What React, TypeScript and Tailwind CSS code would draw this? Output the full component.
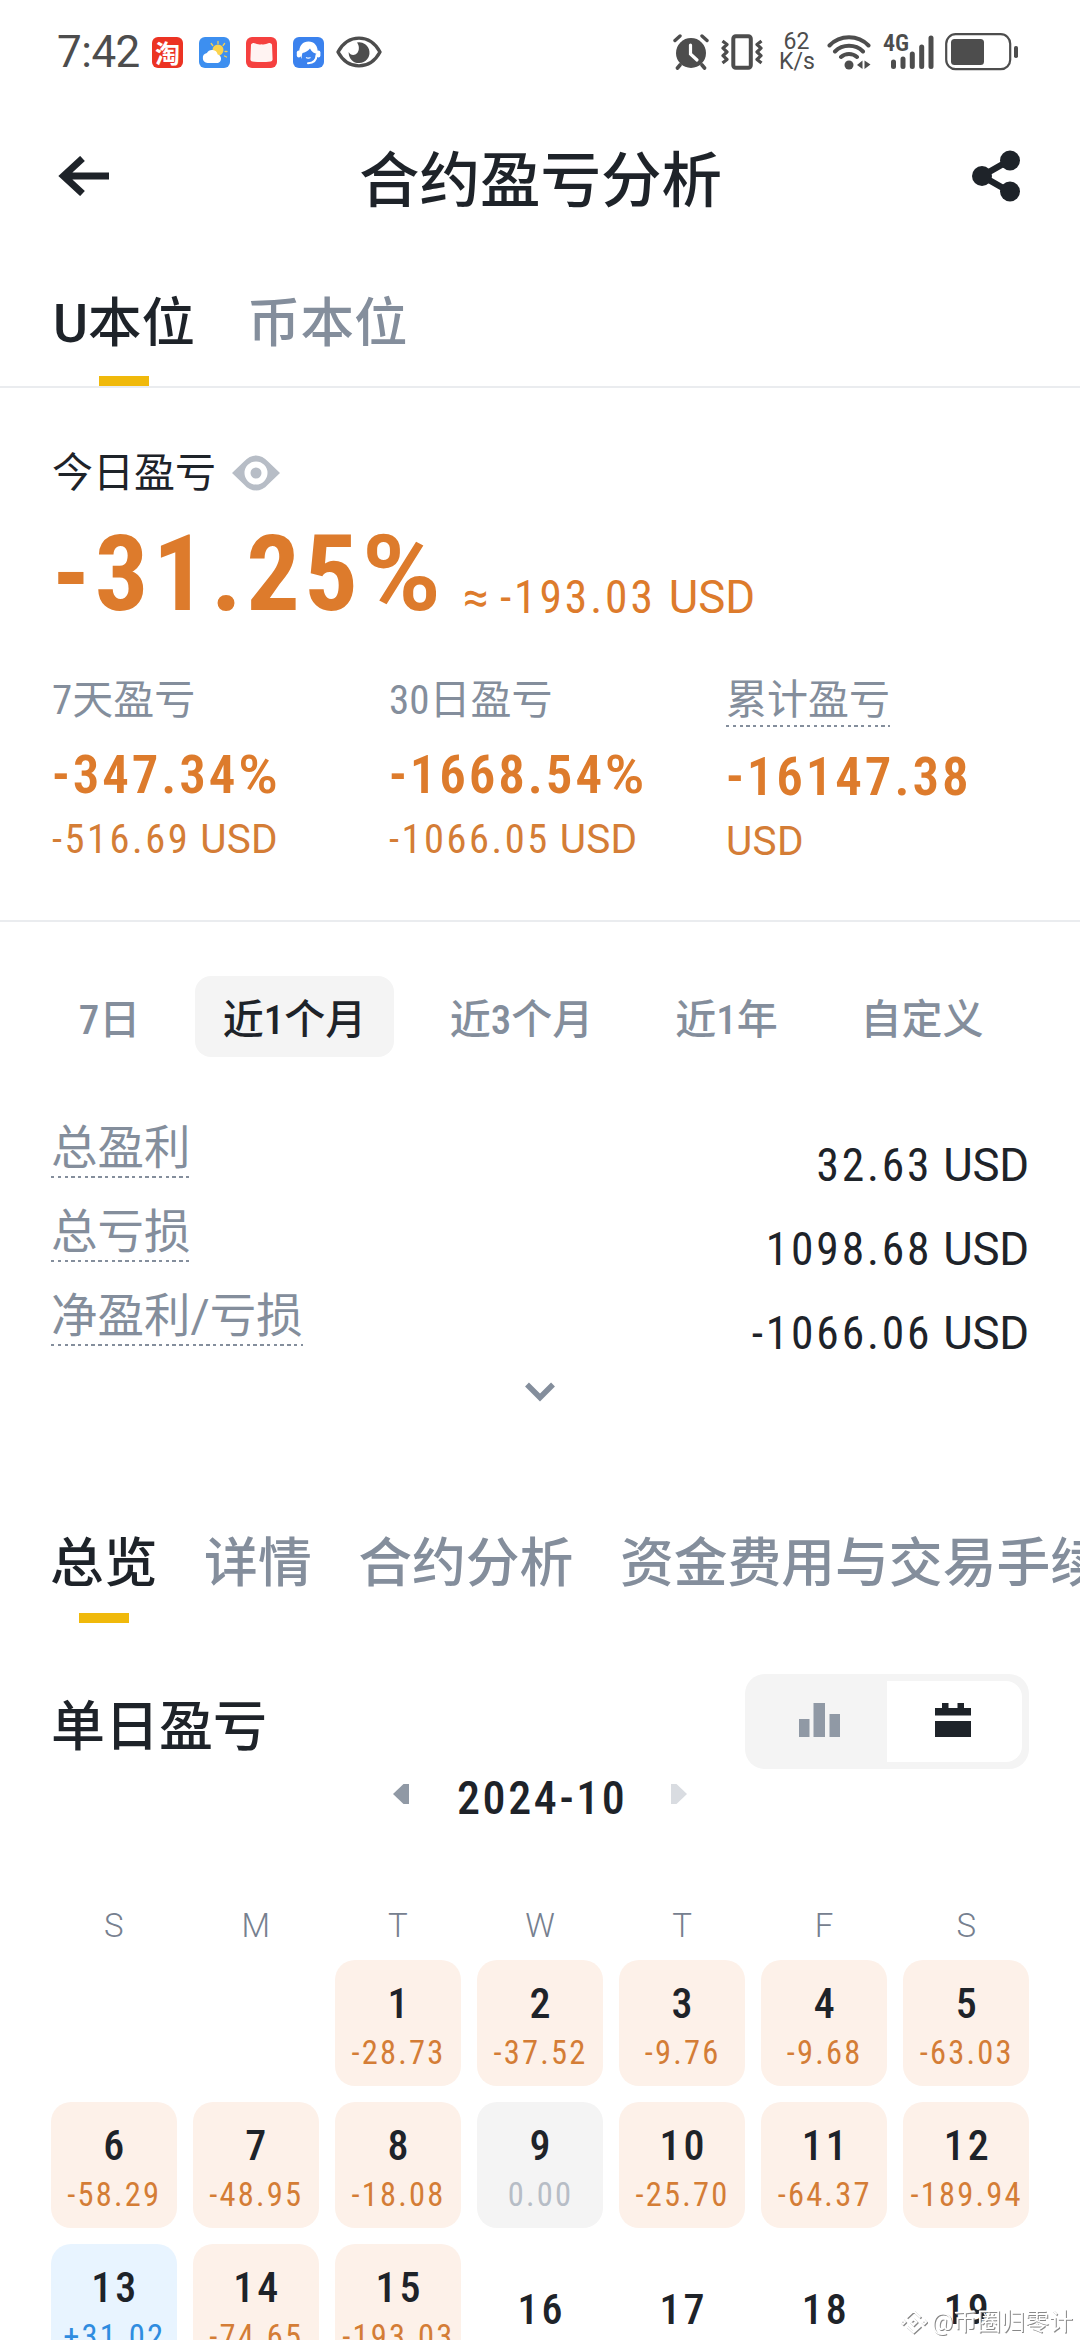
import clsx from "clsx";

const TaobaoIcon = () => (
  <div className="flex size-[31px] items-center justify-center rounded-md bg-[#ec3323] font-['Noto_Sans_CJK_SC',sans-serif] text-[25px] leading-[31px] font-bold text-white">
    淘
  </div>
);

const WeatherIcon = () => (
  <svg width="31" height="31" viewBox="0 0 31 31">
    <rect width="31" height="31" rx="6" fill="#3d8ff0" />
    <g stroke="#f7d04e" strokeWidth="1.3" strokeLinecap="round">
      <path d="M19 4.500v2M12.200 6.500l1.500 2M25.600 6.500l-1.500 2M26 14.500h2M25.500 19l2 1" />
    </g>
    <circle cx="19" cy="13" r="5.500" fill="#fbd34d" />
    <path d="M8.500 26a5 5 0 0 1-.6-9.900 5.800 5.800 0 0 1 10.800 1.300A4.500 4.500 0 0 1 19 26z" fill="#fff" />
  </svg>
);

const BookIcon = () => (
  <svg width="31" height="31" viewBox="0 0 31 31">
    <rect width="31" height="31" rx="6" fill="#f5403f" />
    <path d="M5 7.500q1-2 3-1.500 4 2 7.500 1.300 3.500.7 7.500-1.300 2-.5 3 1.500l.6 15q-.2 2-2 2-9 1-18.200 0-1.800 0-2-2z" fill="#fff3f2" />
  </svg>
);

const SupportIcon = () => (
  <svg width="31" height="31" viewBox="0 0 31 31">
    <rect width="31" height="31" rx="6" fill="#3b82ee" />
    <path
      d="M6 17c0-9 4-12.500 9.500-12.500S25 8 25 17c-3.500-.5-6.500-2-8-5.500-2 2.500-5 4-7.500 4.500-.8 2.500-1 4-.5 6z"
      fill="#fff"
    />
    <rect x="3.800" y="13.500" width="4" height="7" rx="2" fill="#fff" />
    <rect x="23.400" y="13.500" width="4" height="7" rx="2" fill="#fff" />
    <path d="M23.500 18c0 5-3 8-8.500 8.300" fill="none" stroke="#fff" strokeWidth="2" strokeLinecap="round" />
    <path d="M13 20.500c1.500.8 3 .8 4.500 0" fill="none" stroke="#fff" strokeWidth="1.200" />
  </svg>
);

const EyeCareIcon = () => (
  <svg width="46" height="32" viewBox="0 0 46 32">
    <path d="M2 16C12-2.500 34-2.500 44 16 34 34.500 12 34.500 2 16z" fill="none" stroke="#4d4d4d" strokeWidth="3.400" strokeLinejoin="round" />
    <path d="M21 6.500a10.400 10.400 0 1 1-8.300 9.500c1.500 3.500 6 4 8.600 1 2.300-3 2-7.500-.3-10.500z" fill="#4d4d4d" />
  </svg>
);

const AlarmIcon = () => (
  <svg width="36" height="36" viewBox="0 0 36 36" stroke="#4d4d4d" strokeLinecap="round">
    <circle cx="18" cy="19" r="15" fill="#4d4d4d" stroke="none" />
    <path d="M2 6.500l5-4.500M34 6.500L29 2" strokeWidth="3.400" />
    <path d="M7 31l-2.500 3M29 31l2.500 3" strokeWidth="3.600" />
    <path d="M17.500 11v9l6.500 6" fill="none" stroke="#fff" strokeWidth="3.200" />
  </svg>
);

const VibrateIcon = () => (
  <svg width="42" height="36" viewBox="0 0 42 36" fill="none" stroke="#4d4d4d">
    <rect x="12.300" y="2.300" width="17.500" height="31.400" rx="2.500" strokeWidth="4" />
    <path d="M1.500 7l4.500 3.500-4 3.700 4 3.800-4 3.700 4 3.800-4.500 3.500M40.500 7L36 10.500l4 3.700-4 3.800 4 3.700-4 3.800 4.500 3.500" strokeWidth="3.200" strokeLinejoin="round" />
  </svg>
);

const WifiIcon = () => (
  <svg width="44" height="35" viewBox="0 0 44 35" fill="none" stroke="#4d4d4d" strokeWidth="4" strokeLinecap="round">
    <path d="M2.500 10.500C13-.5 31-.5 41.500 10.500M8 16.500c7.500-7.600 20.500-7.600 28 0M14 22c4.500-4 11.500-4 16 0" />
    <circle cx="22" cy="30" r="4.500" fill="#4d4d4d" stroke="none" />
    <path d="M35.500 25.500v8.500l-5.500-4zM37.500 25.500l6 4-6 4.500z" fill="#4d4d4d" stroke="none" />
  </svg>
);

const SignalIcon = () => (
  <div className="relative h-9 w-[51px]">
    <span className="absolute top-0 left-0 font-['Roboto_Condensed',sans-serif] text-[24px] leading-[18px] font-semibold">4G</span>
    <svg className="absolute right-0 bottom-0" width="44" height="35" viewBox="0 0 44 35" stroke="#4d4d4d" strokeWidth="5" strokeLinecap="round">
      <path d="M3.500 27v4.500M13 24v7.500M22.300 19v12.500M31.700 12v19.500M41 3v28.500" />
    </svg>
  </div>
);

const BatteryIcon = () => (
  <svg width="74" height="38" viewBox="0 0 74 38">
    <rect x="1.200" y="1.200" width="64" height="35" rx="9.500" fill="none" stroke="#4d4d4d" strokeWidth="2.200" />
    <rect x="6" y="6" width="33" height="26" rx="3.500" fill="#4d4d4d" />
    <rect x="69" y="13" width="4" height="12" rx="1.800" fill="#4d4d4d" />
  </svg>
);

const StatusBar = () => (
  <div className="flex h-[104px] shrink-0 items-center justify-between pr-[61px] pl-[57px] text-[#4d4d4d]">
    <div className="flex items-center">
      <span className="w-[95px] font-['Roboto',sans-serif] text-[44px] leading-[50px] tracking-[-0.500px]">7:42</span>
      <div className="flex items-center gap-4">
        <TaobaoIcon />
        <WeatherIcon />
        <BookIcon />
        <SupportIcon />
      </div>
      <div className="ml-3">
        <EyeCareIcon />
      </div>
    </div>
    <div className="flex items-center">
      <AlarmIcon />
      <div className="ml-[12px]">
        <VibrateIcon />
      </div>
      <div className="ml-[16px] w-[35px] text-center font-['Roboto',sans-serif] text-[23px] leading-[20px]">
        <div>62</div>
        <div>K/s</div>
      </div>
      <div className="ml-[13px]">
        <WifiIcon />
      </div>
      <div className="ml-[12px]">
        <SignalIcon />
      </div>
      <div className="ml-[11px]">
        <BatteryIcon />
      </div>
    </div>
  </div>
);

const Header = () => (
  <header className="flex h-[152px] shrink-0 items-center justify-between pr-[60px] pb-2 pl-[58px]">
    <svg width="51" height="40" viewBox="0 0 51 40" fill="none" stroke="#1e2329" strokeWidth="7">
      <path d="M24.500 2.500L5.500 20l19 17.500M5 20h46" />
    </svg>
    <h1 className="pt-[12px] text-[60.500px] leading-[70px] font-medium">合约盈亏分析</h1>
    <svg width="48" height="52" viewBox="0 0 48 52" fill="#1e2329">
      <path d="M10 26L38 10M10 26l28 16" stroke="#1e2329" strokeWidth="6.500" />
      <circle cx="10" cy="26" r="10" />
      <circle cx="38" cy="10.500" r="10" />
      <circle cx="38" cy="41.500" r="10" />
    </svg>
  </header>
);

const MarginTabs = () => (
  <nav className="flex h-[132px] shrink-0 gap-[50px] border-b-2 border-[#eaecef] pt-[38px] pl-[51px] text-[53.500px] leading-[60px] font-medium">
    <div className="flex w-[146px] flex-col items-center">
      <span>
        <span className="font-['Roboto',sans-serif]">U</span>本位
      </span>
      <span className="mt-[22px] h-[10px] w-[50px] bg-[#f0b90b]" />
    </div>
    <span className="text-[#848e9c]">币本位</span>
  </nav>
);

const summaries = [
  { label: "7天盈亏", value: "-347.34", percent: true, amount: "-516.69" },
  { label: "30日盈亏", value: "-1668.54", percent: true, amount: "-1066.05" },
  { label: "累计盈亏", value: "-16147.38", amount: "", dotted: true },
];

// dotted rule under labels that open an explanation
const Dotted = () => (
  <div className="h-[2px] w-full bg-[repeating-linear-gradient(90deg,#848e9c_0_3.400px,transparent_3.400px_6.750px)]" />
);

const Today = () => (
  <section className="shrink-0 border-b-2 border-[#eaecef] pt-[55px] pb-[54px] pl-[52px]">
    <div className="flex items-center text-[41px] leading-[60px]">
      <span className="w-[180px]">今日盈亏</span>
      <svg width="48" height="36" viewBox="0 0 48 36">
        <path d="M0 18L12 6.500C19-1.500 29-1.500 36 6.500L48 18 36 29.500c-7 8-17 8-24 0z" fill="#b7bdc6" />
        <circle cx="24" cy="18" r="8.500" fill="none" stroke="#fff" strokeWidth="6" />
      </svg>
    </div>
    <div className="mt-[16px] flex items-baseline text-[#dd7b2c]">
      <span className="w-[411px] font-['Roboto_Condensed',sans-serif] text-[106px] leading-[110px] font-bold tracking-[4.500px]">
        -31.25<span className="font-['Roboto',sans-serif] tracking-normal">%</span>
      </span>
      <span className="translate-y-[3px] font-['Roboto_Condensed',sans-serif] text-[45.500px] leading-[50px] tracking-[2.900px]">
        <span className="font-['Roboto',sans-serif] tracking-normal">≈ </span>-193.03
        <span className="ml-[13px] font-['Roboto',sans-serif] tracking-normal">USD</span>
      </span>
    </div>
    <div className="mt-[46px] flex">
      {summaries.map((s) => (
        <div key={s.label} className="flex w-[337px] flex-col items-start">
          <div className="text-[#848e9c]">
            <div className="text-[41px] leading-[50px]">{s.label}</div>
            {s.dotted && <Dotted />}
          </div>
          <div className="mt-5 font-['Roboto_Condensed',sans-serif] text-[53px] leading-[60px] font-semibold tracking-[2.900px] text-[#dd7b2c]">
            {s.value}
            {s.percent && <span className="font-['Roboto',sans-serif] tracking-normal">%</span>}
          </div>
          <div className="mt-[9px] font-['Roboto_Condensed',sans-serif] text-[40.500px] leading-[50px] tracking-[2.500px] text-[#d47d36]">
            {s.amount && <span className="mr-[10px]">{s.amount}</span>}
            <span className="font-['Roboto',sans-serif] tracking-[0.300px]">USD</span>
          </div>
        </div>
      ))}
    </div>
  </section>
);

const ranges = [
  { label: "7日", className: "w-[115px]" },
  { label: "近1个月", className: "w-[199px]", active: true },
  { label: "近3个月", className: "w-[199px]" },
  { label: "近1年", className: "w-[155px]" },
  { label: "自定义", className: "w-[180px]" },
];

const RangePicker = () => (
  <div className="mt-[54px] flex shrink-0 gap-[28px] pl-[52px]">
    {ranges.map((r) => (
      <div
        key={r.label}
        className={clsx(
          "flex h-[81px] items-center justify-center rounded-2xl pt-[8px] text-[41px] font-medium",
          r.className,
          r.active ? "bg-[#f4f4f4]" : "text-[#848e9c]",
        )}
      >
        {r.label}
      </div>
    ))}
  </div>
);

const totals = [
  { label: "总盈利", value: "32.63" },
  { label: "总亏损", value: "1098.68" },
  { label: "净盈利/亏损", value: "-1066.06" },
];

const Totals = () => (
  <section className="mt-[63px] flex shrink-0 flex-col pr-[51px] pl-[51px]">
    {totals.map((t) => (
      <div key={t.label} className="flex h-[84px] items-start justify-between">
        <div className="font-['Roboto','Noto_Sans_CJK_SC',sans-serif] text-[46.500px] leading-[56px] text-[#848e9c]">
          <div>{t.label}</div>
          <Dotted />
        </div>
        <div className="mt-4 font-['Roboto_Condensed',sans-serif] text-[45.500px] leading-[60px] tracking-[2.800px]">
          {t.value}
          <span className="ml-[11px] font-['Roboto',sans-serif] tracking-[-0.200px]">USD</span>
        </div>
      </div>
    ))}
    <svg className="mt-[10px] self-center" width="30" height="20" viewBox="0 0 30 20" fill="none" stroke="#848e9c" strokeWidth="5.500">
      <path d="M2 2.500l13 13 13-13" />
    </svg>
  </section>
);

const SectionTabs = () => (
  <nav className="mt-[132px] flex h-[89px] shrink-0 gap-[46.500px] pl-[50px] text-[53.800px] leading-[60px] font-medium whitespace-nowrap text-[#848e9c]">
    <div className="flex flex-col items-center text-[#1e2329]">
      <span>总览</span>
      <span className="mt-[19px] h-[10px] w-[50px] bg-[#f0b90b]" />
    </div>
    <span>详情</span>
    <span>合约分析</span>
    <span>资金费用与交易手续费</span>
  </nav>
);

type Day = { day: number; pnl?: string };

const days: Day[] = [
  { day: 1, pnl: "-28.73" },
  { day: 2, pnl: "-37.52" },
  { day: 3, pnl: "-9.76" },
  { day: 4, pnl: "-9.68" },
  { day: 5, pnl: "-63.03" },
  { day: 6, pnl: "-58.29" },
  { day: 7, pnl: "-48.95" },
  { day: 8, pnl: "-18.08" },
  { day: 9, pnl: "0.00" },
  { day: 10, pnl: "-25.70" },
  { day: 11, pnl: "-64.37" },
  { day: 12, pnl: "-189.94" },
  { day: 13, pnl: "+31.02" },
  { day: 14, pnl: "-74.65" },
  { day: 15, pnl: "-193.03" },
  { day: 16 },
  { day: 17 },
  { day: 18 },
  { day: 19 },
];

const DayCell = ({ day, pnl }: Day) => {
  const loss = pnl?.startsWith("-");
  const gain = pnl?.startsWith("+");
  return (
    <div
      className={clsx(
        "flex h-[126px] flex-col items-center justify-center rounded-[20px] font-['Roboto_Condensed',sans-serif]",
        loss && "bg-[#fdf1e9]",
        gain && "bg-[#e8f4ff]",
        pnl && !loss && !gain && "bg-[#f4f4f4]",
      )}
    >
      <span className="pt-[6px] pl-[3px] text-[42px] leading-[48px] font-medium tracking-[3px]">{day}</span>
      {pnl && (
        <span
          className={clsx(
            "mt-[5px] pl-[1px] text-[32.500px] leading-[40px] tracking-[2.200px]",
            loss && "text-[#d47d36]",
            gain && "text-[#2f8ce0]",
            !loss && !gain && "text-[#b7bdc6]",
          )}
        >
          {pnl}
        </span>
      )}
    </div>
  );
};

const DailyPnl = () => (
  <section className="mt-[51px] shrink-0 px-[51px]">
    <div className="flex h-[95px] items-center justify-between">
      <h2 className="pt-[12px] text-[54px] leading-[60px] font-medium">单日盈亏</h2>
      <div className="flex h-[95px] w-[284px] rounded-[20px] bg-[#f4f4f4] p-[7px]">
        <div className="flex w-[135px] items-center pb-[3px] pl-[47px]">
          <svg width="41" height="34" viewBox="0 0 41 34" fill="#9099a5">
            <path d="M0 16h10.500v18H0zM14.500 0H26v34H14.500zM30.500 11H41v23H30.500z" />
          </svg>
        </div>
        <div className="flex flex-1 items-center justify-center rounded-r-[16px] bg-white pr-[3px] pb-[3px]">
          <svg width="36" height="34" viewBox="0 0 36 34" fill="#1e2329">
            <path d="M0 5h7V0h6.500v5h9V0H29v5h7v7.500H0zM0 18h36v16H0z" />
          </svg>
        </div>
      </div>
    </div>
    <div className="mt-[4px] flex items-center justify-center gap-[48px]">
      <svg className="-mt-[8px]" width="16" height="20" viewBox="0 0 16 20">
        <path d="M0 10L10.500 0H16v20h-5.500z" fill="#9099a5" />
      </svg>
      <span className="w-[166px] text-center font-['Roboto_Condensed',sans-serif] text-[46px] leading-[50px] font-medium tracking-[2.600px] whitespace-nowrap">2024-10</span>
      <svg className="-mt-[8px]" width="16" height="20" viewBox="0 0 16 20">
        <path d="M16 10L5.500 0H0v20h5.500z" fill="#d9dce1" />
      </svg>
    </div>
    <div className="mt-[83px] grid grid-cols-7 gap-x-[16.500px] text-center font-['Roboto',sans-serif] text-[33px] leading-[40px] font-light text-[#76808f]">
      {["S", "M", "T", "W", "T", "F", "S"].map((d, i) => (
        <span key={i}>{d}</span>
      ))}
    </div>
    <div className="mt-[14px] grid grid-cols-7 gap-x-[16.500px] gap-y-4">
      <span className="col-span-2" />
      {days.map((d) => (
        <DayCell key={d.day} {...d} />
      ))}
    </div>
  </section>
);

const Watermark = () => (
  <div className="absolute right-[7px] bottom-0 flex h-[36px] items-center gap-[4px] font-['Roboto','Noto_Sans_CJK_SC',sans-serif] text-[24px] leading-[36px] whitespace-nowrap text-white [filter:drop-shadow(1px_1px_0.500px_#888)]">
    <svg width="27" height="24" viewBox="0 0 27 24" fill="none" stroke="#fff" strokeWidth="2">
      <path d="M6.500 7.500l7-6.500 7 6.500M6.500 16l7 6.500 7-6.500M10.500 12l3-3 3 3-3 3zM1 12l2-2 2 2-2 2zM22 12l2-2 2 2-2 2z" />
    </svg>
    <span>@币圈归零计</span>
  </div>
);

export default function App() {
  return (
    <div className="relative flex h-[2340px] w-[1080px] flex-col overflow-hidden bg-white font-['Roboto_Condensed','Noto_Sans_CJK_SC',sans-serif] text-[#1e2329]">
      <StatusBar />
      <Header />
      <MarginTabs />
      <Today />
      <RangePicker />
      <Totals />
      <SectionTabs />
      <DailyPnl />
      <Watermark />
    </div>
  );
}
